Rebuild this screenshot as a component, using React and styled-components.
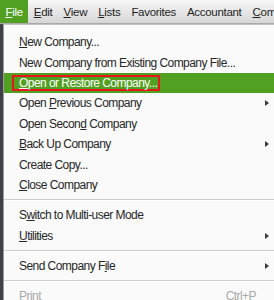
import React from 'react';
import styled, { createGlobalStyle } from 'styled-components';

const Global = createGlobalStyle`
  html, body { margin: 0; padding: 0; background: #fafafa; }
  body { font-family: "Liberation Sans", Arial, sans-serif; }
`;

const Frame = styled.div`
  width: 274px;
  height: 300px;
  overflow: hidden;
  display: flex;
  flex-direction: column;
  background: #fafafa;
`;

const MenuBar = styled.div`
  flex: none;
  height: 23px;
  border-bottom: 1px solid #a9a9a9;
  background: linear-gradient(#f7f7f7, #d6d6d6);
  display: flex;
  align-items: stretch;
  white-space: nowrap;
  font-size: 11.5px;
  letter-spacing: -0.3px;
`;

const BarItem = styled.div`
  display: flex;
  align-items: center;
  padding: 1px 5.5px 0;
  background: ${p => (p.$active ? '#52a022' : 'transparent')};
  color: ${p => (p.$active ? '#ffffff' : '#1e1e1e')};
`;

const Body = styled.div`
  flex: 1;
  min-height: 0;
  display: flex;
`;

const Strip = styled.div`
  width: 3px;
  background: #3e4246;
`;

const Menu = styled.div`
  flex: 1;
  display: flex;
  flex-direction: column;
  border-left: 1px solid #9c9c9c;
  border-top: 1px solid #c4c4c4;
  background: #fafafa;
  padding-top: 7px;
  font-size: 12px;
  letter-spacing: -0.55px;
  white-space: nowrap;
`;

const Row = styled.div`
  height: 20.4px;
  flex: none;
  display: flex;
  align-items: center;
  padding: 0 5px 0 15px;
  background: ${p => (p.$active ? '#52a022' : 'transparent')};
  color: ${p => (p.$disabled ? '#a9a9a9' : p.$active ? '#ffffff' : '#262626')};
`;

const Label = styled.span`
  flex: 1;
  display: block;
`;

const Marked = styled.span`
  display: inline-block;
  height: 16px;
  line-height: 12px;
  box-sizing: border-box;
  margin-left: -7px;
  padding: 0 1px 0 5px;
  border: 2px solid #e5161c;
  vertical-align: middle;
`;

const U = styled.span`
  text-decoration: underline;
  text-underline-offset: 1px;
`;

const Shortcut = styled.span`
  margin-right: 13px;
`;

const Arrow = styled.span`
  width: 0;
  height: 0;
  border-left: 4px solid #3a3a3a;
  border-top: 3.5px solid transparent;
  border-bottom: 3.5px solid transparent;
`;

const Separator = styled.div`
  height: 10px;
  flex: none;
  display: flex;
  align-items: center;
  &::after {
    content: '';
    flex: 1;
    height: 1px;
    background: #cdcdcd;
    border-bottom: 1px solid #ffffff;
  }
`;

export default function App() {
  return (
    <>
      <Global />
      <Frame>
        <MenuBar>
          <BarItem $active><U>F</U>ile</BarItem>
          <BarItem><U>E</U>dit</BarItem>
          <BarItem><U>V</U>iew</BarItem>
          <BarItem><U>L</U>ists</BarItem>
          <BarItem>Favorites</BarItem>
          <BarItem>Accountant</BarItem>
          <BarItem><U>C</U>ompany</BarItem>
        </MenuBar>
        <Body>
          <Strip />
          <Menu>
            <Row><Label><U>N</U>ew Company...</Label></Row>
            <Row><Label>New Company from Existing Company File...</Label></Row>
            <Row $active>
              <Label><Marked><U>O</U>pen or Restore Company...</Marked></Label>
            </Row>
            <Row><Label>Open <U>P</U>revious Company</Label><Arrow /></Row>
            <Row><Label>Open Secon<U>d</U> Company</Label></Row>
            <Row><Label><U>B</U>ack Up Company</Label><Arrow /></Row>
            <Row><Label>Create Copy...</Label></Row>
            <Row><Label><U>C</U>lose Company</Label></Row>
            <Separator />
            <Row><Label>S<U>w</U>itch to Multi-user Mode</Label></Row>
            <Row><Label><U>U</U>tilities</Label><Arrow /></Row>
            <Separator />
            <Row><Label>Send Company F<U>i</U>le</Label><Arrow /></Row>
            <Separator />
            <Row $disabled><Label>Print</Label><Shortcut>Ctrl+P</Shortcut></Row>
          </Menu>
        </Body>
      </Frame>
    </>
  );
}
